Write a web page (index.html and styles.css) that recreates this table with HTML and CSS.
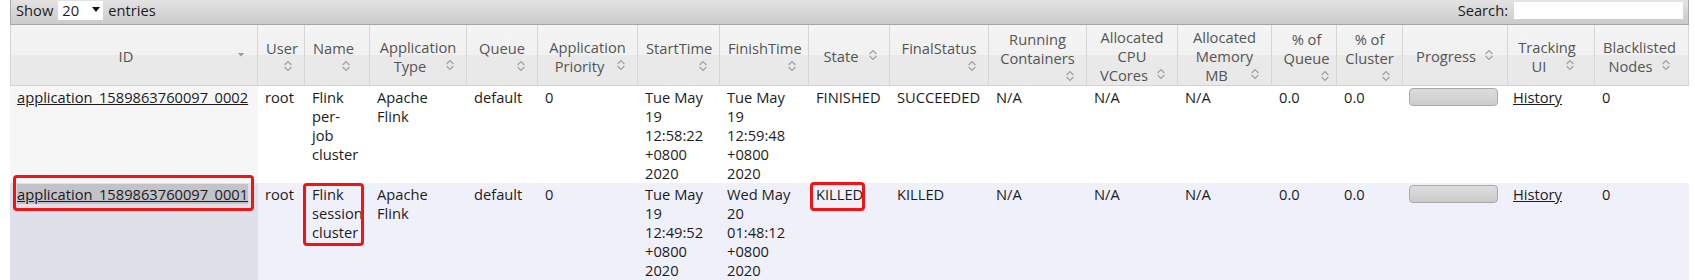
FILE: index.html
```html
<!DOCTYPE html>
<html>
<head>
<meta charset="utf-8">
<title>Applications</title>
<link rel="stylesheet" href="styles.css">
</head>
<body>
<div class="page">
  <div class="toolbar">
    <div class="length">
      <span>Show</span>
      <span class="select">20<svg class="caret" viewBox="0 0 8 5" width="8" height="5"><path d="M0 0h8L4 5z" fill="#111"/></svg></span>
      <span>entries</span>
    </div>
    <div class="filter">
      <span>Search:</span>
      <span class="search"></span>
    </div>
  </div>

  <table class="apps">
    <colgroup>
      <col class="c-id"><col class="c-user"><col class="c-name"><col class="c-type"><col class="c-queue">
      <col class="c-prio"><col class="c-start"><col class="c-finish"><col class="c-state"><col class="c-final">
      <col class="c-run"><col class="c-cpu"><col class="c-mem"><col class="c-pq"><col class="c-pc">
      <col class="c-prog"><col class="c-track"><col class="c-black">
    </colgroup>
    <thead>
      <tr>
        <th class="h-id"><div class="sw">ID<svg class="si" viewBox="0 0 16 16"><path d="M4.8 6h6.4L8 9.6z" fill="#9c9c9c"/></svg></div></th>
        <th><div class="sw">User<svg class="si" viewBox="0 0 16 16"><path d="M4.6 7 8 3.6 11.4 7M4.6 9 8 12.4 11.4 9" fill="none" stroke="#a0a0a0" stroke-width="1.2"/></svg></div></th>
        <th class="h-name"><div class="sw">Name<svg class="si" viewBox="0 0 16 16"><path d="M4.6 7 8 3.6 11.4 7M4.6 9 8 12.4 11.4 9" fill="none" stroke="#a0a0a0" stroke-width="1.2"/></svg></div></th>
        <th><div class="sw">Application Type<svg class="si" viewBox="0 0 16 16"><path d="M4.6 7 8 3.6 11.4 7M4.6 9 8 12.4 11.4 9" fill="none" stroke="#a0a0a0" stroke-width="1.2"/></svg></div></th>
        <th><div class="sw">Queue<svg class="si" viewBox="0 0 16 16"><path d="M4.6 7 8 3.6 11.4 7M4.6 9 8 12.4 11.4 9" fill="none" stroke="#a0a0a0" stroke-width="1.2"/></svg></div></th>
        <th><div class="sw">Application Priority<svg class="si" viewBox="0 0 16 16"><path d="M4.6 7 8 3.6 11.4 7M4.6 9 8 12.4 11.4 9" fill="none" stroke="#a0a0a0" stroke-width="1.2"/></svg></div></th>
        <th><div class="sw">StartTime<svg class="si" viewBox="0 0 16 16"><path d="M4.6 7 8 3.6 11.4 7M4.6 9 8 12.4 11.4 9" fill="none" stroke="#a0a0a0" stroke-width="1.2"/></svg></div></th>
        <th><div class="sw">FinishTime<svg class="si" viewBox="0 0 16 16"><path d="M4.6 7 8 3.6 11.4 7M4.6 9 8 12.4 11.4 9" fill="none" stroke="#a0a0a0" stroke-width="1.2"/></svg></div></th>
        <th><div class="sw">State<svg class="si" viewBox="0 0 16 16"><path d="M4.6 7 8 3.6 11.4 7M4.6 9 8 12.4 11.4 9" fill="none" stroke="#a0a0a0" stroke-width="1.2"/></svg></div></th>
        <th><div class="sw">FinalStatus<svg class="si" viewBox="0 0 16 16"><path d="M4.6 7 8 3.6 11.4 7M4.6 9 8 12.4 11.4 9" fill="none" stroke="#a0a0a0" stroke-width="1.2"/></svg></div></th>
        <th><div class="sw">Running Containers<svg class="si" viewBox="0 0 16 16"><path d="M4.6 7 8 3.6 11.4 7M4.6 9 8 12.4 11.4 9" fill="none" stroke="#a0a0a0" stroke-width="1.2"/></svg></div></th>
        <th><div class="sw">Allocated CPU VCores<svg class="si" viewBox="0 0 16 16"><path d="M4.6 7 8 3.6 11.4 7M4.6 9 8 12.4 11.4 9" fill="none" stroke="#a0a0a0" stroke-width="1.2"/></svg></div></th>
        <th><div class="sw">Allocated Memory MB<svg class="si" viewBox="0 0 16 16"><path d="M4.6 7 8 3.6 11.4 7M4.6 9 8 12.4 11.4 9" fill="none" stroke="#a0a0a0" stroke-width="1.2"/></svg></div></th>
        <th class="h-pq"><div class="sw">% of Queue<svg class="si" viewBox="0 0 16 16"><path d="M4.6 7 8 3.6 11.4 7M4.6 9 8 12.4 11.4 9" fill="none" stroke="#a0a0a0" stroke-width="1.2"/></svg></div></th>
        <th><div class="sw">% of Cluster<svg class="si" viewBox="0 0 16 16"><path d="M4.6 7 8 3.6 11.4 7M4.6 9 8 12.4 11.4 9" fill="none" stroke="#a0a0a0" stroke-width="1.2"/></svg></div></th>
        <th class="h-prog"><div class="sw">Progress<svg class="si" viewBox="0 0 16 16"><path d="M4.6 7 8 3.6 11.4 7M4.6 9 8 12.4 11.4 9" fill="none" stroke="#a0a0a0" stroke-width="1.2"/></svg></div></th>
        <th class="h-track"><div class="sw">Tracking UI<svg class="si" viewBox="0 0 16 16"><path d="M4.6 7 8 3.6 11.4 7M4.6 9 8 12.4 11.4 9" fill="none" stroke="#a0a0a0" stroke-width="1.2"/></svg></div></th>
        <th class="h-black"><div class="sw">Blacklisted Nodes<svg class="si" viewBox="0 0 16 16"><path d="M4.6 7 8 3.6 11.4 7M4.6 9 8 12.4 11.4 9" fill="none" stroke="#a0a0a0" stroke-width="1.2"/></svg></div></th>
      </tr>
    </thead>
    <tbody>
      <tr class="row-a">
        <td class="sorted"><a href="#">application_1589863760097_0002</a></td>
        <td>root</td>
        <td class="d-name">Flink per-job cluster</td>
        <td>Apache Flink</td>
        <td>default</td>
        <td>0</td>
        <td>Tue May 19 12:58:22 +0800 2020</td>
        <td>Tue May 19 12:59:48 +0800 2020</td>
        <td>FINISHED</td>
        <td>SUCCEEDED</td>
        <td>N/A</td>
        <td>N/A</td>
        <td>N/A</td>
        <td>0.0</td>
        <td>0.0</td>
        <td class="d-prog"><div class="bar"></div></td>
        <td class="d-track"><a href="#">History</a></td>
        <td>0</td>
      </tr>
      <tr class="row-b">
        <td class="sorted"><a href="#" class="hot">application_1589863760097_0001</a></td>
        <td>root</td>
        <td class="d-name">Flink session cluster</td>
        <td>Apache Flink</td>
        <td>default</td>
        <td>0</td>
        <td>Tue May 19 12:49:52 +0800 2020</td>
        <td>Wed May 20 01:48:12 +0800 2020</td>
        <td>KILLED</td>
        <td>KILLED</td>
        <td>N/A</td>
        <td>N/A</td>
        <td>N/A</td>
        <td>0.0</td>
        <td>0.0</td>
        <td class="d-prog"><div class="bar"></div></td>
        <td class="d-track"><a href="#">History</a></td>
        <td>0</td>
      </tr>
    </tbody>
  </table>

  <div class="mark mark-id"></div>
  <div class="mark mark-name"></div>
  <div class="mark mark-state"></div>
</div>
</body>
</html>
```
FILE: styles.css
```css
* {
  box-sizing: border-box;
}

html, body {
  margin: 0;
  padding: 0;
  background: #ffffff;
}

body {
  font-family: "Open Sans", "Noto Sans", "Liberation Sans", sans-serif;
  font-size: 14.7px;
  line-height: 19px;
  color: #1c1c1c;
  overflow: hidden;
}

.page {
  position: relative;
  width: 1695px;
  height: 280px;
  padding: 0 6px 0 10px;
}

/* ---------- toolbar ---------- */
.toolbar {
  display: flex;
  justify-content: space-between;
  align-items: center;
  width: 1679px;
  height: 25px;
  padding: 0 5px 3px 5px;
  background: linear-gradient(#e3e3e3, #cbcbcb);
  border-left: 1px solid #aaaaaa;
  border-right: 1px solid #aaaaaa;
  border-bottom: 1px solid #a6a6a6;
}

.length,
.filter {
  display: flex;
  align-items: center;
}

.select {
  display: inline-flex;
  align-items: center;
  justify-content: space-between;
  width: 45px;
  height: 19px;
  margin: 0 5px 0 5px;
  padding: 0 3px 0 4px;
  background: #ffffff;
}

.caret {
  display: block;
  margin-top: -2px;
}

.search {
  display: block;
  width: 169px;
  height: 17px;
  margin-left: 6px;
  background: #ffffff;
}

/* ---------- table ---------- */
.apps {
  width: 1679px;
  table-layout: fixed;
  border-collapse: separate;
  border-spacing: 0;
}

.c-id { width: 248px; }
.c-user { width: 47px; }
.c-name { width: 65px; }
.c-type { width: 97px; }
.c-queue { width: 71px; }
.c-prio { width: 100px; }
.c-start { width: 82px; }
.c-finish { width: 89px; }
.c-state { width: 81px; }
.c-final { width: 99px; }
.c-run { width: 98px; }
.c-cpu { width: 91px; }
.c-mem { width: 94px; }
.c-pq { width: 65px; }
.c-pc { width: 66px; }
.c-prog { width: 105px; }
.c-track { width: 87px; }
.c-black { width: 94px; }

.apps th {
  padding: 3px 8px 0 8px;
  font-weight: normal;
  color: #555555;
  text-align: center;
  vertical-align: middle;
  background: linear-gradient(#f4f4f4 0%, #f1f1f1 50%, #e9e9e9 50%, #e9e9e9 100%);
  border-right: 1px solid #d6d6d6;
  border-bottom: 1px solid #d3d3d3;
}

.apps th.h-id {
  border-left: 1px solid #d6d6d6;
}

.apps th.h-name { padding-right: 15px; }
.apps th.h-pq { padding-right: 3px; }
.apps th.h-prog { padding-right: 10px; }
.apps th.h-track { padding-right: 16px; }
.apps th.h-black { padding-right: 14px; }

.sw {
  line-height: 19px;
}

.si {
  float: right;
  width: 16px;
  height: 16px;
}

.apps td {
  padding: 2px 7px 0 7px;
  vertical-align: top;
  text-align: left;
  height: 97px;
}

.apps td.d-name {
  padding-right: 10px;
}

.apps td.d-prog {
  padding-left: 6px;
}

.apps td.d-track {
  padding-left: 5px;
}

.row-a td { background: #ffffff; }
.row-a td.sorted { background: #f6f6f6; }
.row-b td { background: #f0f0fb; }
.row-b td.sorted { background: #e0e0ea; }

.apps a {
  color: #1c1c1c;
  text-decoration: underline;
}

.apps a.hot {
  background: #c2c2c8;
}

.bar {
  width: 89px;
  height: 18px;
  border: 1px solid #a9a9a9;
  border-radius: 4px;
  background: linear-gradient(#dddddd, #cbcbcb);
}

/* ---------- annotation marks ---------- */
.mark {
  position: absolute;
  border: 3px solid #f01414;
  border-radius: 4px;
}

.mark-id {
  left: 13px;
  top: 175px;
  width: 241px;
  height: 36px;
}

.mark-name {
  left: 303px;
  top: 183px;
  width: 61px;
  height: 63px;
}

.mark-state {
  left: 810px;
  top: 182px;
  width: 55px;
  height: 29px;
}
```
